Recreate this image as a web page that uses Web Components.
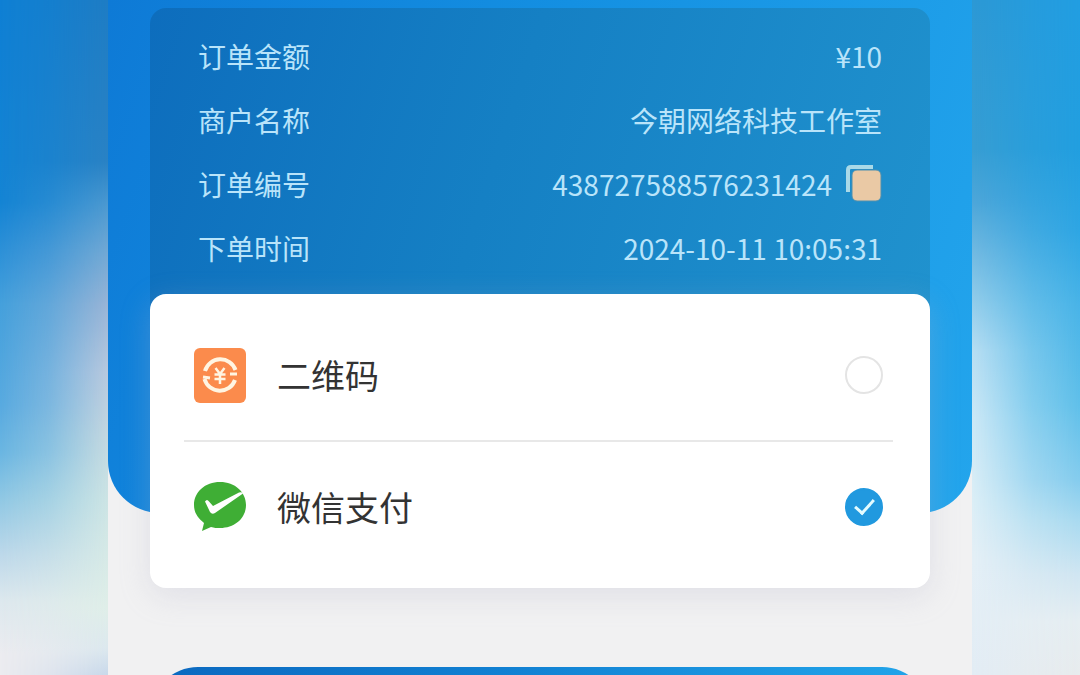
<!DOCTYPE html>
<html lang="zh-CN">
<head>
<meta charset="utf-8">
<meta name="viewport" content="width=device-width, initial-scale=1">
<title>订单支付</title>
<style>
  html, body { margin: 0; }
  body {
    font-family: "Noto Sans CJK SC", sans-serif;
    background: #e4edf1;
  }
</style>
</head>
<body>
<pay-page>
  <order-summary slot="summary">
    <order-row label="订单金额">¥10</order-row>
    <order-row label="商户名称">今朝网络科技工作室</order-row>
    <order-row label="订单编号" copyable>438727588576231424</order-row>
    <order-row label="下单时间">2024-10-11 10:05:31</order-row>
  </order-summary>
  <pay-methods></pay-methods>
  <pay-submit></pay-submit>
</pay-page>
<script>
const define = (name, html, setup) => {
  const template = document.createElement('template');
  template.innerHTML = html;
  customElements.define(name, class extends HTMLElement {
    constructor() {
      super();
      this.attachShadow({ mode: 'open' }).append(template.content.cloneNode(true));
    }
    connectedCallback() { if (setup) setup(this, this.shadowRoot); }
  });
};

define('pay-page', `
  <style>
    :host { display: grid; grid-template-columns: 1fr 8fr 1fr; grid-template-rows: 100vh; }
    /* Each backdrop crossfades from its outer edge to the edge beside the page. */
    .side { display: grid; }
    .side::before { content: ""; background: var(--inner); }
    .left {
      background: linear-gradient(#0f80d4 0%, #1484d4 30%, #2c90d8 37%, #44a0dc 45%, #58aae0 60%, #6ab6e2 67%, #90c8e4 74%, #bcd8ea 82%, #dde8ee 89%, #ececf0 97%);
      --inner: linear-gradient(#1e7cc4 0%, #2a82c4 24%, #4a98d0 30%, #70a8d4 37%, #98b4d6 45%, #b8c8de 55%, #c4d8e0 65%, #cce4e4 74%, #dfeee8 90%, #dce8ee 96%, #c8d8ea 100%);
    }
    .right {
      background: linear-gradient(#229ee2 0%, #229fe0 22%, #2ea6e4 34%, #48b4e8 45%, #60c0ea 60%, #84ccee 71%, #a8daf0 77%, #d0e6f2 85%, #e6eef2 92%, #e8ecee 100%);
      --inner: linear-gradient(#2c98d4 0%, #379dd2 22%, #4ea6d8 30%, #70b8e0 37%, #94cdea 45%, #b8def2 52%, #cce8f6 62%, #dbeef6 74%, #e4eff6 83%, #e2ecf4 100%);
    }
    .left::before { mask-image: linear-gradient(90deg, transparent 0%, rgba(0,0,0,.35) 45%, #000 100%); }
    .right::before { mask-image: linear-gradient(270deg, transparent 0%, rgba(0,0,0,.35) 45%, #000 100%); }
    main { background: #f1f1f2; min-width: 0; overflow-y: auto; scrollbar-width: none; }
    .hero {
      padding: 8px 42px 200px;
      border-radius: 0 0 52px 52px;
      background: linear-gradient(108deg, #0e7ad6 0%, #1490e2 45%, #23a5ec 100%);
    }
    .body { padding: 0 42px; margin-top: -219px; }
  </style>
  <div class="side left"></div>
  <main>
    <div class="hero"><slot name="summary"></slot></div>
    <div class="body"><slot></slot></div>
  </main>
  <div class="side right"></div>
`);

define('order-summary', `
  <style>
    :host {
      display: block;
      padding: 16px 48px 33px;
      border-radius: 16px 16px 0 0;
      background: linear-gradient(108deg, #0d6dbd 0%, #1580c4 45%, #2092ce 100%);
    }
  </style>
  <slot></slot>
`);

define('order-row', `
  <style>
    :host {
      display: flex; align-items: center; justify-content: space-between;
      height: 64px; font-size: 28px; line-height: 40px; color: #b9e4fa;
    }
    .value { display: flex; align-items: center; gap: 14px; }
    button { display: flex; padding: 0; border: 0; background: none; cursor: pointer; }
    button[hidden] { display: none; }
  </style>
  <span class="label"></span>
  <span class="value"><slot></slot>
    <button type="button" aria-label="复制订单编号" hidden>
      <svg width="36" height="40" viewBox="0 0 36 40">
        <path d="M2 28V6q0-3 3-3H27" fill="none" stroke="#a9d9e8" stroke-width="4"/>
        <rect x="6" y="6" width="29" height="31" rx="5" fill="#eac9a5" stroke="#4c8fb0" stroke-width="1"/>
      </svg>
    </button>
  </span>
`, (host, root) => {
  root.querySelector('.label').textContent = host.getAttribute('label');
  const button = root.querySelector('button');
  button.hidden = !host.hasAttribute('copyable');
  button.onclick = () => navigator.clipboard && navigator.clipboard.writeText(host.textContent);
});

define('qr-icon', `
  <style>:host, svg { display: block; }</style>
  <svg width="54" height="56" viewBox="0 0 54 56" fill="none">
    <rect x="1" y="1" width="52" height="55" rx="6" fill="#fb8b4c"/>
    <g stroke="#fff5e2" stroke-width="4">
      <path d="M12 24a16 16 0 0 1 30.500-1"/>
      <path d="M42 33a16 16 0 0 1-30.500-1"/>
      <path d="M10 30l7 1M37 27h7" stroke-width="3"/>
      <path d="M22.500 21l4.500 6 4.500-6M21.500 27.500h11M21.500 32h11M27 26v11" stroke-width="2.500"/>
    </g>
  </svg>
`);

define('wechat-icon', `
  <style>:host, svg { display: block; }</style>
  <svg width="54" height="56" viewBox="0 0 54 56">
    <path d="M27 3C12 3 1 13 1 26c0 8 4 13 10 18l-2 8 9-4c3 1 6 1 9 1 15 0 26-10 26-23S42 3 27 3z" fill="#3fae35"/>
    <path d="M12 22.500q2-3 4 0l4 4.500L46 13.500q3-1 4 1L22 34q-3 2-5-1z" fill="#fff"/>
  </svg>
`);

define('pay-methods', `
  <style>
    :host {
      display: block; padding: 16px 37px 16px 34px; border-radius: 16px;
      background: #fff; box-shadow: 0 8px 30px rgba(180,180,200,.28);
    }
    fieldset { margin: 0; padding: 0; border: 0; }
    label {
      display: flex; align-items: center; height: 130px;
      padding: 0 10px 0 9px; color: #333; font-size: 34px; line-height: 48px; cursor: pointer;
    }
    label + label { border-top: 2px solid #e8e8e8; }
    .name { flex: 1; padding-left: 30px; }
    input {
      appearance: none; display: grid; place-items: center; box-sizing: border-box;
      width: 38px; height: 38px; margin: 0; border: 2px solid #e4e4e4; border-radius: 50%; background: #fff;
    }
    input:checked { border-color: #2199df; background: #2199df; }
    input:checked::before {
      content: ""; width: 16px; height: 8px; margin-bottom: 6px;
      border: solid #e3fbff; border-width: 0 0 3px 3px; transform: rotate(-48deg);
    }
  </style>
  <fieldset aria-label="支付方式">
    <label><qr-icon></qr-icon><span class="name">二维码</span><input type="radio" name="method" value="qr"></label>
    <label><wechat-icon></wechat-icon><span class="name">微信支付</span><input type="radio" name="method" value="wechat" checked></label>
  </fieldset>
`);

define('pay-submit', `
  <style>
    :host { display: block; padding-top: 79px; }
    button {
      display: block; width: 100%; height: 96px; border: 0; border-radius: 48px; cursor: pointer;
      background: linear-gradient(90deg, #0b68bf 0%, #1180d2 45%, #22a5ea 100%);
    }
  </style>
  <button type="button" aria-label="立即支付"></button>
`);
</script>
</body>
</html>
